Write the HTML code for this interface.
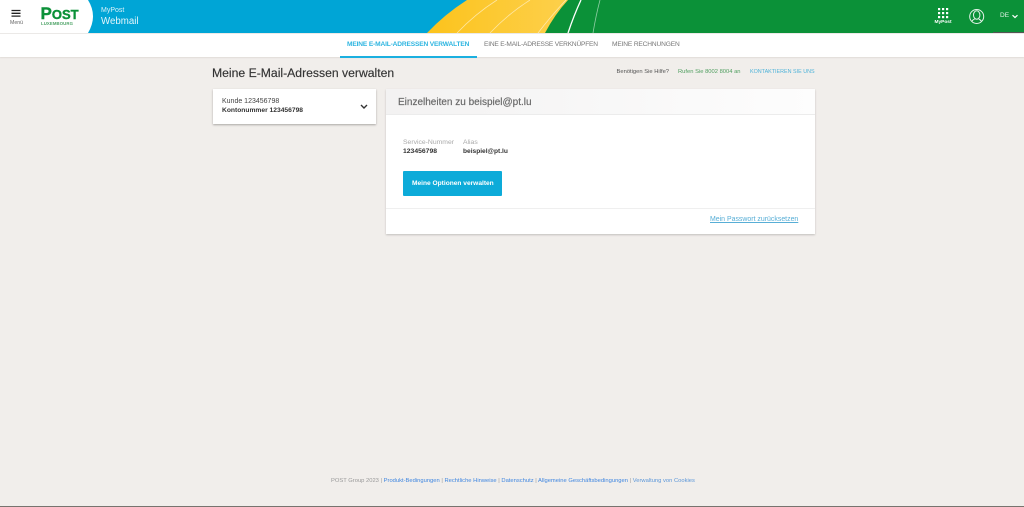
<!DOCTYPE html>
<html lang="de">
<head>
<meta charset="utf-8">
<title>Webmail</title>
<style>
html,body{margin:0;padding:0;width:1024px;height:507px;overflow:hidden;background:#f1eeeb;font-family:"Liberation Sans",sans-serif;}
.t{position:absolute;white-space:nowrap;line-height:1;}
.box{position:absolute;}
a{color:inherit;text-decoration:none;}
</style>
</head>
<body>
<!-- Header -->
<svg class="box" style="left:0;top:0" width="1024" height="34" viewBox="0 0 1024 34">
<defs><linearGradient id="y" x1="0" x2="1" y1="0" y2="0"><stop offset="0" stop-color="#fcc31c"/><stop offset="1" stop-color="#fdd04c"/></linearGradient></defs>
<rect width="1024" height="33" fill="#00a5d6"/>
<path d="M467 0H570V33H427Q445 14 467 0Z" fill="url(#y)"/>
<path d="M568 0H1024V33H545Q555 14 568 0Z" fill="#0b9138"/>
<path d="M497 0Q475 14 457 33M530 0Q508 14 490 33M566 0Q551 16 538 33" fill="none" stroke="#fff" stroke-opacity=".55" stroke-width=".8"/>
<path d="M581 0Q574 15 568 33" fill="none" stroke="#fff" stroke-width="1.300"/>
<path d="M600 0Q596 15 593 33" fill="none" stroke="#fff" stroke-opacity=".55" stroke-width=".8"/>
<path d="M0 0H88Q98 16 88 33H0Z" fill="#fff"/>
<rect x="0" y="33" width="1024" height="1" fill="#ebe9e7"/>
<rect x="993" y="32" width="31" height="1" fill="#555"/>
<!-- hamburger -->
<path d="M11.500 10.500H20.500M11.500 13.300H20.500M11.500 16.100H20.500" stroke="#222" stroke-width="1.300"/>
<!-- apps grid -->
<g fill="#fff"><rect x="938" y="8" width="2.200" height="2.200"/><rect x="942" y="8" width="2.200" height="2.200"/><rect x="946" y="8" width="2.200" height="2.200"/><rect x="938" y="12" width="2.200" height="2.200"/><rect x="942" y="12" width="2.200" height="2.200"/><rect x="946" y="12" width="2.200" height="2.200"/><rect x="938" y="16" width="2.200" height="2.200"/><rect x="942" y="16" width="2.200" height="2.200"/><rect x="946" y="16" width="2.200" height="2.200"/></g>
<!-- user -->
<g fill="none" stroke="#e6f3ea" stroke-width="1"><circle cx="976.700" cy="16.500" r="7"/><ellipse cx="976.700" cy="15" rx="3.200" ry="4.200"/><path d="M971.700 21.500Q973 19.500 974.700 19M981.700 21.500Q980 19.500 978.700 19"/></g>
<path d="M1012.500 15.200L1015 17.500L1017.500 15.200" fill="none" stroke="#fff" stroke-width="1.200"/>
</svg>
<span class="t" style="left:10px;top:20.500px;font-size:5.200px;color:#666">Menü</span>
<span class="t" style="left:40.500px;top:5px;font-size:17px;font-weight:bold;color:#0b9138;-webkit-text-stroke:.4px #0b9138">P<span style="font-size:13px">OST</span></span>
<span class="t" style="left:41px;top:22px;font-size:4.300px;font-weight:bold;color:#4fa468;letter-spacing:.1px">LUXEMBOURG</span>
<span class="t" style="left:101px;top:6.500px;font-size:7px;color:#d9f1f9">MyPost</span>
<span class="t" style="left:101px;top:16.500px;font-size:9.700px;color:#e4f5fb">Webmail</span>
<span class="t" style="left:934.500px;top:21px;font-size:4.800px;font-weight:bold;color:#fff">MyPost</span>
<span class="t" style="left:1000px;top:13.200px;font-size:6.500px;color:#e6f3ea">DE</span>

<!-- Nav -->
<div class="box" style="left:0;top:34px;width:1024px;height:23px;background:#fff;box-shadow:0 1px 1px #e0dcd8"></div>
<span class="t" style="left:347px;top:42px;font-size:6.600px;font-weight:bold;letter-spacing:-.15px;color:#2db5e0">MEINE E-MAIL-ADRESSEN VERWALTEN</span>
<div class="box" style="left:340px;top:56px;width:137px;height:1.500px;background:#1bb0e0"></div>
<span class="t" style="left:484px;top:42px;font-size:6.600px;letter-spacing:-.2px;color:#777">EINE E-MAIL-ADRESSE VERKNÜPFEN</span>
<span class="t" style="left:612px;top:42px;font-size:6.600px;letter-spacing:-.15px;color:#777">MEINE RECHNUNGEN</span>

<!-- Title row -->
<span class="t" style="left:212px;top:66.500px;font-size:12.200px;color:#333;-webkit-text-stroke:.15px #333">Meine E-Mail-Adressen verwalten</span>
<span class="t" style="left:616.500px;top:69.500px;font-size:5.800px;color:#555">Benötigen Sie Hilfe?</span>
<span class="t" style="left:678px;top:69.500px;font-size:5.800px;color:#4f9e5f">Rufen Sie 8002 8004 an</span>
<span class="t" style="left:750px;top:69.500px;font-size:5.400px;color:#4fb3d9">KONTAKTIEREN SIE UNS</span>

<!-- Left card -->
<div class="box" style="left:213px;top:89px;width:163px;height:35px;background:#fff;box-shadow:0 1px 2px rgba(0,0,0,.3)"></div>
<span class="t" style="left:222px;top:98px;font-size:7px;color:#444">Kunde 123456798</span>
<span class="t" style="left:222px;top:108px;font-size:6.700px;font-weight:bold;color:#333">Kontonummer 123456798</span>
<svg class="box" style="left:360px;top:104px" width="8" height="6" viewBox="0 0 8 6"><path d="M1 1L4 4L7 1" fill="none" stroke="#333" stroke-width="1.400"/></svg>

<!-- Right card -->
<div class="box" style="left:386px;top:89px;width:429px;height:145px;background:#fff;box-shadow:0 1px 2px rgba(0,0,0,.2)"></div>
<div class="box" style="left:386px;top:89px;width:429px;height:26px;background:linear-gradient(90deg,#f3f2f2,#fdfdfd);border-bottom:1px solid #ececec;box-sizing:border-box"></div>
<span class="t" style="left:398px;top:98px;font-size:10px;color:#666;-webkit-text-stroke:.15px #666">Einzelheiten zu beispiel@pt.lu</span>
<span class="t" style="left:403px;top:139.500px;font-size:6.800px;color:#aaa">Service-Nummer</span>
<span class="t" style="left:463px;top:139.500px;font-size:6.800px;color:#aaa">Alias</span>
<span class="t" style="left:403px;top:148.500px;font-size:6.800px;font-weight:bold;color:#333">123456798</span>
<span class="t" style="left:463px;top:148.500px;font-size:6.600px;font-weight:bold;color:#333">beispiel@pt.lu</span>
<div class="box" style="left:403px;top:171px;width:99px;height:25px;background:#0dabd9;border-radius:1px"></div>
<span class="t" style="left:412px;top:180.500px;font-size:6.600px;font-weight:bold;color:#fff">Meine Optionen verwalten</span>
<div class="box" style="left:386px;top:208px;width:429px;height:1px;background:#efefef"></div>
<span class="t" style="left:710px;top:217px;font-size:6.950px;color:#57aed6;text-decoration:underline">Mein Passwort zurücksetzen</span>

<!-- Footer -->
<span class="t" style="left:331px;top:478.500px;font-size:5.800px;color:#999">POST Group 2023 | <span style="color:#3f86e0">Produkt-Bedingungen</span> | <span style="color:#3f86e0">Rechtliche Hinweise</span> | <span style="color:#3f86e0">Datenschutz</span> | <span style="color:#3f86e0">Allgemeine Geschäftsbedingungen</span> | <span style="color:#5c97d9">Verwaltung von Cookies</span></span>
<div class="box" style="left:0;top:506px;width:1024px;height:1px;background:#77736e"></div>
</body>
</html>
